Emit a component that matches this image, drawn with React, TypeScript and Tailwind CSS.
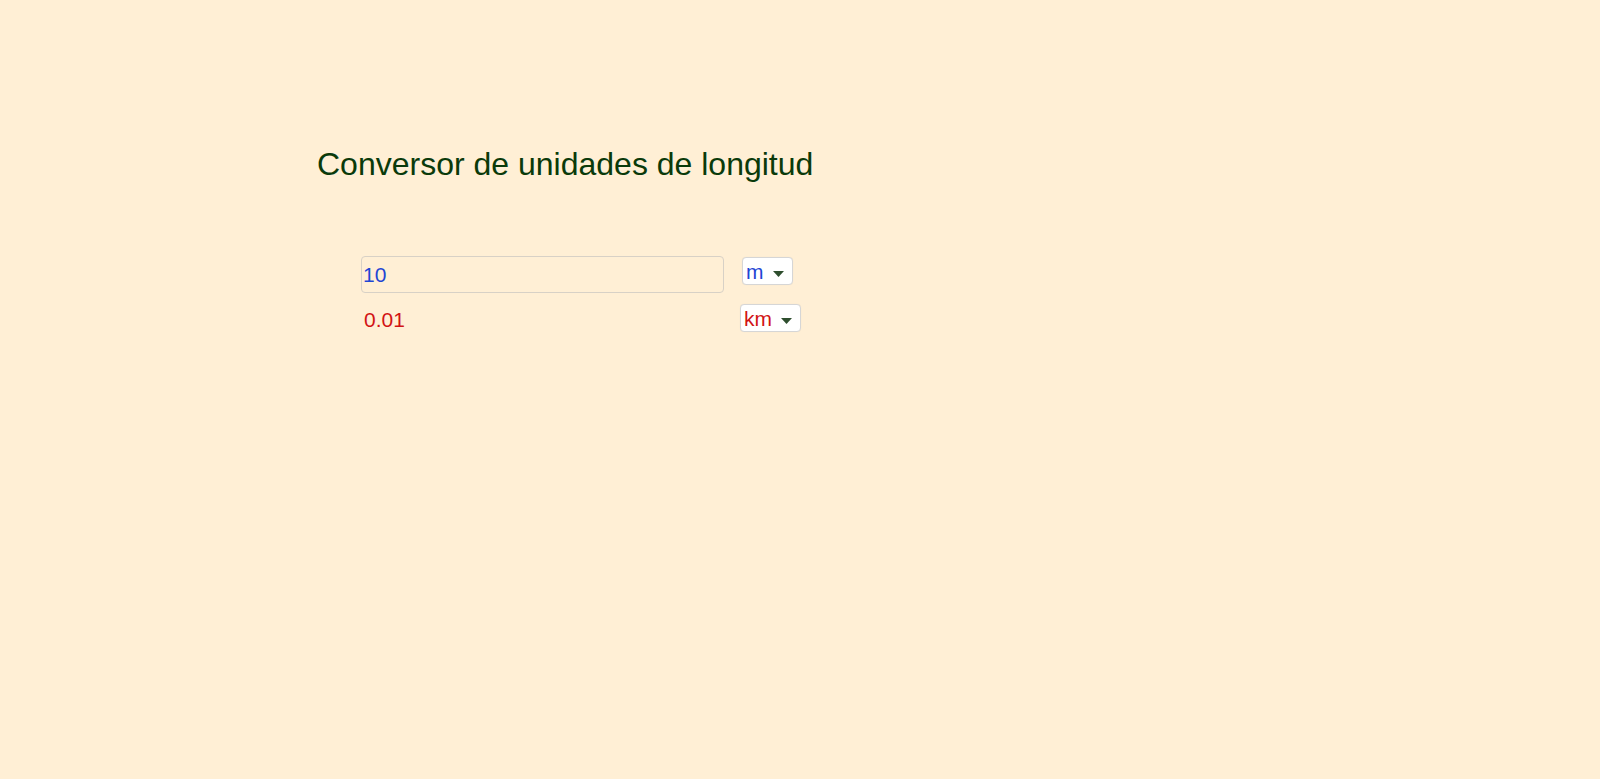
import React from "react";

function Caret() {
  return (
    <svg width="11" height="6" viewBox="0 0 11 6" className="mt-[12.5px] ml-[9px] shrink-0">
      <polygon points="0,0 11,0 5.5,6" fill="#2e4e2e" />
    </svg>
  );
}

function Dropdown({ label, color }: { label: string; color: string }) {
  return (
    <div className="h-[28px] flex items-start bg-white border border-[#d6d6d6] rounded-[4px] pl-[3px] pr-[8px] shadow-[0_0_1px_rgba(0,0,0,0.08)]">
      <span className="text-[21px] leading-[27px]" style={{ color }}>
        {label}
      </span>
      <Caret />
    </div>
  );
}

export default function App() {
  return (
    <div
      className="min-h-screen w-full bg-[#ffefd5] pt-[146px] pl-[317px]"
      style={{ fontFamily: '"Liberation Sans", Arial, sans-serif' }}
    >
      <div className="text-[32px] leading-[37px] text-[#0a3a0a]">
        Conversor de unidades de longitud
      </div>
      <div className="mt-[73px] pl-[44px] flex items-start">
        <div className="w-[363px] h-[37px] border border-[#d8d1c6] rounded-[4px] flex items-center pl-[1px]">
          <span className="text-[21px] leading-[24px] text-[#1f46d4]">10</span>
        </div>
        <div className="ml-[18px] mt-[1px]">
          <Dropdown label="m" color="#1f46d4" />
        </div>
      </div>
      <div className="mt-[11px] pl-[44px] flex items-start">
        <div className="w-[379px] pl-[3px] text-[21px] leading-[31px] text-[#d21414]">0.01</div>
        <Dropdown label="km" color="#d21414" />
      </div>
    </div>
  );
}
